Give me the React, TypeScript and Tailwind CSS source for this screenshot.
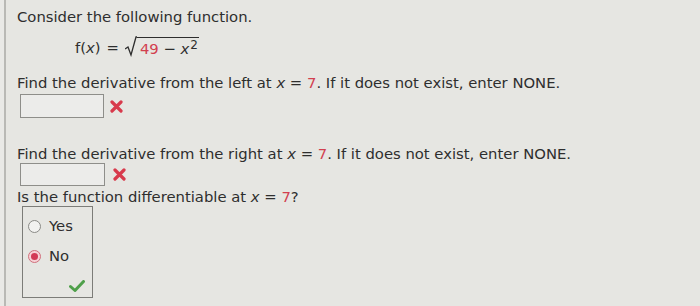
export default function App() {
  const red = "text-[#d2404f]";
  return (
    <div className="w-[700px] h-[306px] bg-[#e6e6e2] overflow-hidden flex" style={{ fontFamily: '"DejaVu Sans", Verdana, sans-serif' }}>
      <div className="w-[4px] shrink-0 bg-[#e9e9e6]" />
      <div className="w-[2px] shrink-0 bg-[#b9b9b5]" />
      <div className="flex-1 flex flex-col pl-[11px] pt-[7px] text-[14.8px] text-[#2e2e2e] leading-[20px]">
        <p>Consider the following function.</p>
        {/* formula */}
        <div className="flex items-end ml-[58px] mt-[9px] h-[22px]">
          <span>f(<i>x</i>)</span>
          <span className="mx-[6px]">=</span>
          <span className="flex items-end">
            <svg width="12" height="21" viewBox="0 0 12 21" className="mb-[1px]">
              <path d="M0 13 L3 11 L6 19 L11 1 L12 1" fill="none" stroke="#2e2e2e" strokeWidth="1.3" />
            </svg>
            <span className="border-t border-[#2e2e2e] pt-[2px] pl-[3px] pr-[1px] leading-[18px]">
              <span className={red}>49</span>
              <span> − <i>x</i></span>
              <sup className="text-[12px] relative -top-[5px] ml-[1px]">2</sup>
            </span>
          </span>
        </div>
        <p className="mt-[15px]">
          Find the derivative from the left at <i>x</i> = <span className={red}>7</span>. If it does not exist, enter NONE.
        </p>
        <div className="flex items-center mt-[1px] ml-[3px] gap-[6px]">
          <div className="w-[84px] h-[24px] border border-[#8e8e8a] bg-[#ececea]" />
          <XMark />
        </div>
        <p className="mt-[26px]">
          Find the derivative from the right at <i>x</i> = <span className={red}>7</span>. If it does not exist, enter NONE.
        </p>
        <div className="flex items-center mt-[-1px] ml-[3px] gap-[8px]">
          <div className="w-[85px] h-[23px] border border-[#8e8e8a] bg-[#ececea]" />
          <XMark />
        </div>
        <p className="mt-[1px]">
          Is the function differentiable at <i>x</i> = <span className={red}>7</span>?
        </p>
        <div className="ml-[5px] -mt-[1px] w-[71px] h-[92px] border border-[#7c7c78] flex flex-col pl-[5px] pt-[9px]">
          <label className="flex items-center gap-[8px]">
            <span className="w-[13px] h-[13px] rounded-full border border-[#8a8a86] bg-[#f2f2f0]" />
            <span>Yes</span>
          </label>
          <label className="flex items-center gap-[8px] mt-[10px]">
            <span className="w-[13px] h-[13px] rounded-full border border-[#d0707c] bg-[#f6d2d6] flex items-center justify-center">
              <span className="w-[7px] h-[7px] rounded-full bg-[#d23a55]" />
            </span>
            <span>No</span>
          </label>
          <div className="flex justify-end pr-[7px] mt-[14px]">
            <svg width="16" height="12" viewBox="0 0 16 12">
              <path d="M1.5 6.5 L6 10.5 L14.5 1.5" fill="none" stroke="#4fa04a" strokeWidth="3" strokeLinecap="round" strokeLinejoin="round" />
            </svg>
          </div>
        </div>
      </div>
    </div>
  );
}

function XMark() {
  return (
    <svg width="13" height="13" viewBox="0 0 13 13">
      <path d="M2 2 L11 11 M11 2 L2 11" stroke="#d83a4c" strokeWidth="3.2" strokeLinecap="round" />
    </svg>
  );
}
